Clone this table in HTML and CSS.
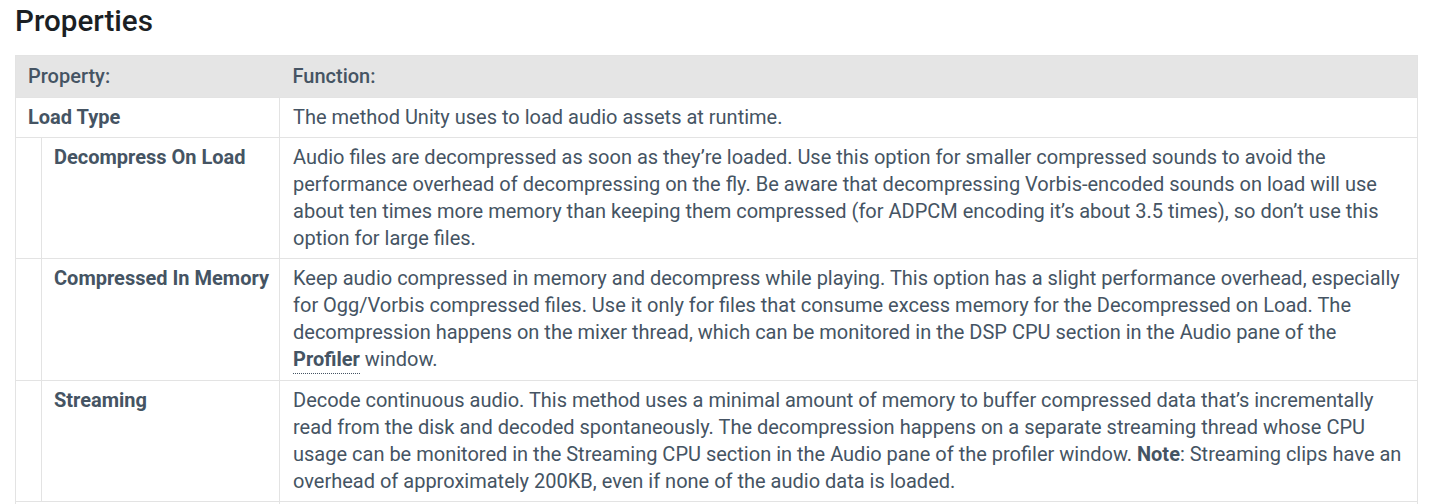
FILE: index.html
```html
<!DOCTYPE html>
<html lang="en">
<head>
<meta charset="utf-8">
<title>Properties</title>
<link rel="stylesheet" href="styles.css">
</head>
<body>
<main class="content">
  <h2 class="title">Properties</h2>
  <table class="props">
    <colgroup>
      <col class="c-indent">
      <col class="c-prop">
      <col class="c-func">
    </colgroup>
    <thead>
      <tr>
        <th colspan="2" class="h-prop">Property:</th>
        <th>Function:</th>
      </tr>
    </thead>
    <tbody>
      <tr>
        <td colspan="2" class="name">Load Type</td>
        <td>The method Unity uses to load audio assets at runtime.</td>
      </tr>
      <tr>
        <td class="indent"></td>
        <td class="name">Decompress On Load</td>
        <td>Audio files are decompressed as soon as they’re loaded. Use this option for smaller compressed sounds to avoid the performance overhead of decompressing on the fly. Be aware that decompressing Vorbis-encoded sounds on load will use about ten times more memory than keeping them compressed (for ADPCM encoding it’s about 3.5 times), so don’t use this option for large files.</td>
      </tr>
      <tr>
        <td class="indent"></td>
        <td class="name">Compressed In Memory</td>
        <td>Keep audio compressed in memory and decompress while playing. This option has a slight performance overhead, especially for Ogg/Vorbis compressed files. Use it only for files that consume excess memory for the Decompressed on Load. The decompression happens on the mixer thread, which can be monitored in the DSP CPU section in the Audio pane of the <a class="tip" href="#">Profiler</a> window.</td>
      </tr>
      <tr>
        <td class="indent"></td>
        <td class="name">Streaming</td>
        <td>Decode continuous audio. This method uses a minimal amount of memory to buffer compressed data that’s incrementally read from the disk and decoded spontaneously. The decompression happens on a separate streaming thread whose CPU usage can be monitored in the Streaming CPU section in the Audio pane of the profiler window. <strong>Note</strong>: Streaming clips have an overhead of approximately 200KB, even if none of the audio data is loaded.</td>
      </tr>
      <tr>
        <td colspan="2" class="name">Preload Audio Data</td>
        <td>When you enable this option, Unity preloads the audio clip when it loads the scene.</td>
      </tr>
    </tbody>
  </table>
</main>
</body>
</html>
```
FILE: styles.css
```css
html, body {
  margin: 0;
  padding: 0;
  background: #ffffff;
}

body {
  font-family: Roboto, "Liberation Sans", Arial, sans-serif;
  color: #455463;
  font-size: 20px;
  line-height: 27px;
}

.content {
  padding: 3px 22px 0 15px;
}

.title {
  margin: 0 0 16px 0;
  font-size: 29.6px;
  line-height: 36px;
  font-weight: 500;
  color: #1b1f24;
}

.props {
  width: 1403px;
  border-collapse: collapse;
  table-layout: fixed;
  border: 1px solid #e3e3e3;
}

.c-indent { width: 26px; }
.c-prop { width: 238px; }

.props th {
  background: #e5e5e5;
  text-align: left;
  font-weight: 500;
  padding: 7px 13px 7px 13px;
  border: none;
}

.props th.h-prop {
  padding-left: 12px;
}

.props td {
  vertical-align: top;
  padding: 6px 13px 6px 13px;
  border: 1px solid #e3e3e3;
}

.props td.indent {
  padding: 0;
}

.props td.name {
  font-weight: 700;
  padding-left: 12px;
  padding-right: 2px;
  white-space: nowrap;
}

.props strong {
  font-weight: 700;
}

.tip {
  display: inline-block;
  line-height: 27px;
  color: inherit;
  font-weight: 700;
  text-decoration: none;
  border-bottom: 1px dotted #455463;
}
```
